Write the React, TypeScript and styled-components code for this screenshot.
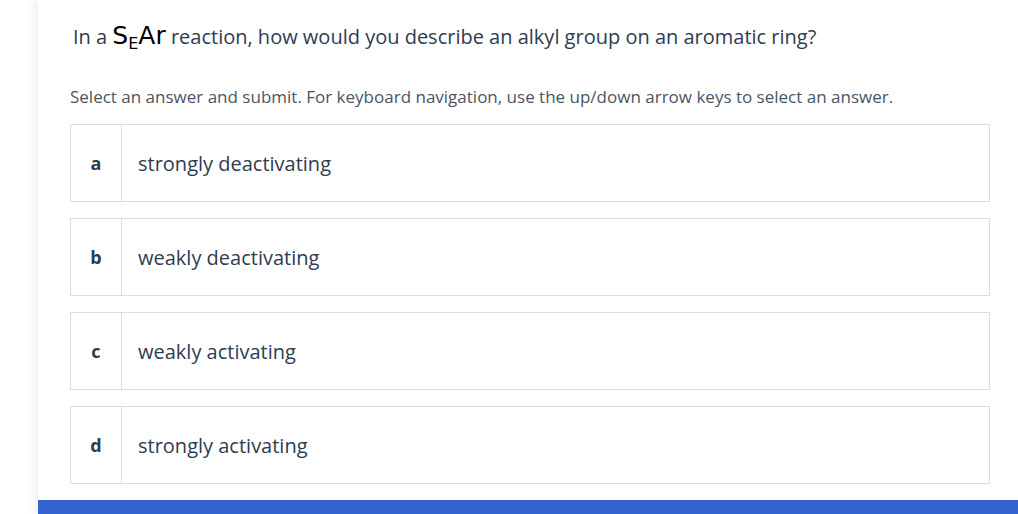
import React from 'react'
import styled, { createGlobalStyle } from 'styled-components'

const GlobalStyle = createGlobalStyle`
    html, body {
        margin: 0;
        padding: 0;
        background: #ffffff;
    }
    body {
        font-family: "Open Sans", "Noto Sans", sans-serif;
    }
`

const Page = styled.div`
    display: flex;
    height: 514px;
    overflow: hidden;
`

const Panel = styled.div`
    display: flex;
    flex-direction: column;
    flex: 1;
    margin-left: 38px;
    background: #ffffff;
    box-shadow: -4px 0 8px rgba(0, 0, 0, 0.06);
`

const Content = styled.div`
    flex: 1;
    padding: 21px 28px 0 32px;
`

const Question = styled.h1`
    margin: 0 0 0 3px;
    font-size: 20px;
    line-height: 30px;
    font-weight: 400;
    color: #2e3c4f;
`

const Formula = styled.span`
    font-family: "DejaVu Sans", sans-serif;
    font-size: 25px;
    color: #000000;
    sub {
        font-size: 16px;
        vertical-align: -5px;
        line-height: 0;
    }
`

const Hint = styled.p`
    margin: 33px 0 15px;
    font-size: 17px;
    line-height: 24px;
    color: #4b5563;
`

const Options = styled.div`
    display: flex;
    flex-direction: column;
    gap: 16px;
`

const Option = styled.div`
    display: flex;
    height: 78px;
    box-sizing: border-box;
    border: 1px solid #dcdcdc;
    cursor: pointer;
`

const Letter = styled.div`
    display: flex;
    align-items: center;
    justify-content: center;
    width: 50px;
    border-right: 1px solid #dcdcdc;
    font-size: 18px;
    font-weight: 700;
    color: #2e3c4f;
`

const Label = styled.div`
    display: flex;
    align-items: center;
    padding-left: 16px;
    font-size: 20px;
    color: #2e3c4f;
`

const BottomBar = styled.div`
    height: 14px;
    background: #3464d0;
`

const answers = [
    { key: 'a', text: 'strongly deactivating' },
    { key: 'b', text: 'weakly deactivating' },
    { key: 'c', text: 'weakly activating' },
    { key: 'd', text: 'strongly activating' },
]

const App = () => {
    return (
        <>
            <GlobalStyle />
            <Page>
                <Panel>
                    <Content>
                        <Question>
                            In a <Formula>S<sub>E</sub>Ar</Formula> reaction, how would you describe an alkyl group on an aromatic ring?
                        </Question>
                        <Hint>Select an answer and submit. For keyboard navigation, use the up/down arrow keys to select an answer.</Hint>
                        <Options>
                            {answers.map(a => (
                                <Option key={a.key}>
                                    <Letter>{a.key}</Letter>
                                    <Label>{a.text}</Label>
                                </Option>
                            ))}
                        </Options>
                    </Content>
                    <BottomBar />
                </Panel>
            </Page>
        </>
    )
}

export default App
